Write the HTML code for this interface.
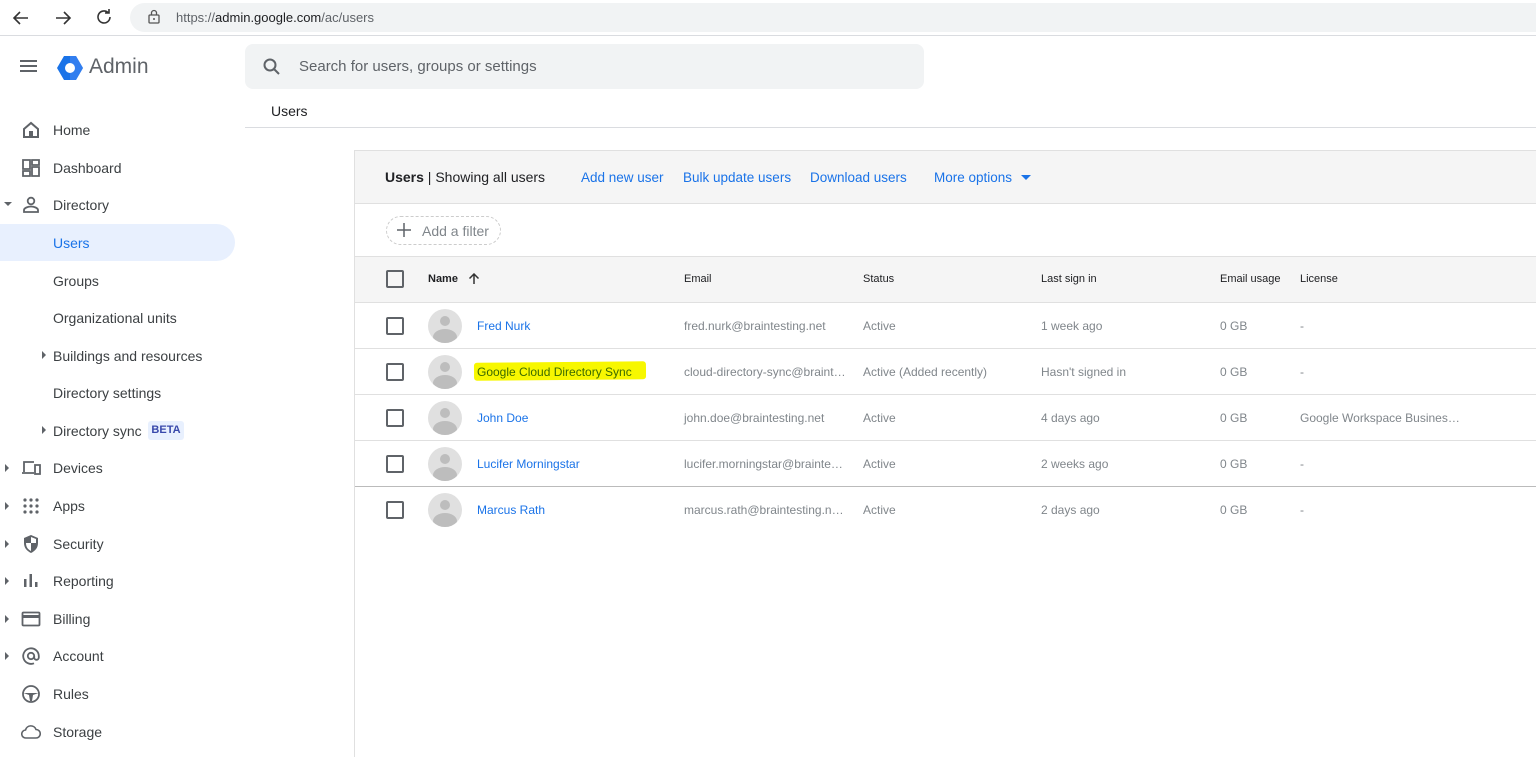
<!DOCTYPE html>
<html><head><meta charset="utf-8"><style>
*{box-sizing:border-box;margin:0;padding:0}
body{width:1536px;height:757px;overflow:hidden;background:#fff;font-family:"Liberation Sans",Arial,sans-serif;color:#3c4043;position:relative}
.abs{position:absolute}
.topbar{left:0;top:0;width:1536px;height:36px;background:#fff;border-bottom:1px solid #dadce0}
.url{left:130px;top:3px;width:1420px;height:29px;background:#f1f3f4;border-radius:15px}
.nav{position:absolute;left:0;width:240px;height:38px;font-size:14px;color:#3c4043}
.nav span.t{position:absolute;left:53px;top:11px}
.nav svg{position:absolute;left:21px;top:9px}
.tri{position:absolute;left:5px;top:15px;width:0;height:0;border-top:4px solid transparent;border-bottom:4px solid transparent;border-left:4px solid #5f6368}
.row{position:absolute;left:355px;width:1181px;height:46px;border-bottom:1px solid #e0e0e0}
.cb{position:absolute;left:31px;top:14px;width:18px;height:18px;border:2px solid #5f6368;border-radius:2px}
.av{position:absolute;left:73px;top:6px;width:34px;height:34px;border-radius:50%;background:#e0e0e0;overflow:hidden}
.av:before{content:"";position:absolute;left:12px;top:7px;width:10px;height:10px;border-radius:50%;background:#bdbdbd}
.av:after{content:"";position:absolute;left:5px;top:20px;width:24px;height:16px;border-radius:50%;background:#bdbdbd}
.nm{position:absolute;left:122px;top:16px;font-size:12px;color:#1a73e8}
.c{position:absolute;top:16px;font-size:12px;color:#80868b}
.lk{position:absolute;top:170px;font-size:13.5px;color:#1a73e8}
</style></head><body>
<div class="abs topbar"></div>
<svg class="abs" style="left:11px;top:8px" width="20" height="20" viewBox="0 0 20 20"><path d="M17 10H4M9 4L3 10l6 6" stroke="#333" stroke-width="1.6" fill="none"/></svg>
<svg class="abs" style="left:53px;top:8px" width="20" height="20" viewBox="0 0 20 20"><path d="M3 10h13M11 4l6 6-6 6" stroke="#333" stroke-width="1.6" fill="none"/></svg>
<svg class="abs" style="left:94px;top:7px" width="20" height="20" viewBox="0 0 20 20"><path d="M16 10a6 6 0 1 1-2-4.5M15 2v4h-4" stroke="#333" stroke-width="1.6" fill="none"/></svg>
<div class="abs url"></div>
<svg class="abs" style="left:147px;top:9px" width="14" height="16" viewBox="0 0 14 16"><rect x="2" y="6" width="10" height="8" rx="1" stroke="#555" fill="none" stroke-width="1.3"/><path d="M4.5 6V4a2.5 2.5 0 0 1 5 0v2" stroke="#555" fill="none" stroke-width="1.3"/><circle cx="7" cy="10" r="1" fill="#555"/></svg>
<div class="abs" style="left:176px;top:10px;font-size:13px;color:#5f6368">https://<span style="color:#202124">admin.google.com</span>/ac/users</div>

<svg class="abs" style="left:19px;top:58px" width="20" height="16" viewBox="0 0 20 16"><path d="M1 3h17M1 8h17M1 13h17" stroke="#5f6368" stroke-width="2"/></svg>
<svg class="abs" style="left:56px;top:54px" width="28" height="28" viewBox="0 0 28 28"><path d="M8 2h12l7 12-7 12H8L1 14z" fill="#1a73e8"/><path d="M14 2h6l7 12-7 12h-6z" fill="#4285f4" opacity=".6"/><circle cx="14" cy="14" r="5" fill="#fff"/></svg>
<div class="abs" style="left:89px;top:55px;font-size:21px;color:#5f6368">Admin</div>

<div class="abs" style="left:245px;top:44px;width:679px;height:45px;background:#f1f3f4;border-radius:8px"></div>
<svg class="abs" style="left:262px;top:57px" width="20" height="20" viewBox="0 0 20 20"><circle cx="8" cy="8" r="5.5" stroke="#5f6368" stroke-width="2" fill="none"/><path d="M12 12l5 5" stroke="#5f6368" stroke-width="2"/></svg>
<div class="abs" style="left:299px;top:58px;font-size:15px;color:#5f6368">Search for users, groups or settings</div>
<div class="abs" style="left:271px;top:103px;font-size:14px;color:#202124">Users</div>
<div class="abs" style="left:245px;top:127px;width:1291px;height:1px;background:#dadce0"></div>

<div class="nav" style="top:111px"><svg width="20" height="20" viewBox="0 0 20 20"><path d="M3 9l7-6 7 6v8H3z" stroke="#5f6368" stroke-width="2" fill="none"/><rect x="8" y="11" width="4" height="6" fill="#5f6368"/></svg><span class="t">Home</span></div>
<div class="nav" style="top:149px"><svg width="20" height="20" viewBox="0 0 20 20"><path d="M2 2h7v9H2zM11 2h7v5h-7zM2 13h7v5H2zM11 9h7v9h-7z" stroke="#5f6368" stroke-width="1.8" fill="none"/></svg><span class="t">Dashboard</span></div>
<div class="nav" style="top:186px"><div style="position:absolute;left:4px;top:16px;border-left:4px solid transparent;border-right:4px solid transparent;border-top:4px solid #5f6368"></div><svg width="20" height="20" viewBox="0 0 20 20"><circle cx="10" cy="6" r="3.3" stroke="#5f6368" stroke-width="1.8" fill="none"/><path d="M3 17v-2c0-2 4-3.5 7-3.5s7 1.5 7 3.5v2z" stroke="#5f6368" stroke-width="1.8" fill="none"/></svg><span class="t">Directory</span></div>
<div class="abs" style="left:0;top:224px;width:235px;height:37px;background:#e8f0fe;border-radius:0 19px 19px 0"></div>
<div class="abs" style="left:53px;top:235px;font-size:14px;color:#1a73e8">Users</div>
<div class="abs" style="left:53px;top:273px;font-size:14px">Groups</div>
<div class="abs" style="left:53px;top:310px;font-size:14px">Organizational units</div>
<div class="abs" style="left:42px;top:351px;border-top:4px solid transparent;border-bottom:4px solid transparent;border-left:4px solid #5f6368"></div>
<div class="abs" style="left:53px;top:348px;font-size:14px">Buildings and resources</div>
<div class="abs" style="left:53px;top:385px;font-size:14px">Directory settings</div>
<div class="abs" style="left:42px;top:426px;border-top:4px solid transparent;border-bottom:4px solid transparent;border-left:4px solid #5f6368"></div>
<div class="abs" style="left:53px;top:423px;font-size:14px">Directory sync</div>
<div class="abs" style="left:148px;top:421px;width:36px;height:19px;background:#e8f0fe;border-radius:3px;font-size:11px;font-weight:bold;color:#3949ab;text-align:center;line-height:19px">BETA</div>
<div class="nav" style="top:449px"><div class="tri"></div><svg width="20" height="20" viewBox="0 0 20 20"><path d="M3 14V4h10M1 15h12M14 7h5v9h-5z" stroke="#5f6368" stroke-width="1.8" fill="none"/></svg><span class="t">Devices</span></div>
<div class="nav" style="top:487px"><div class="tri"></div><svg width="20" height="20" viewBox="0 0 20 20" fill="#5f6368"><circle cx="4" cy="4" r="1.6"/><circle cx="10" cy="4" r="1.6"/><circle cx="16" cy="4" r="1.6"/><circle cx="4" cy="10" r="1.6"/><circle cx="10" cy="10" r="1.6"/><circle cx="16" cy="10" r="1.6"/><circle cx="4" cy="16" r="1.6"/><circle cx="10" cy="16" r="1.6"/><circle cx="16" cy="16" r="1.6"/></svg><span class="t">Apps</span></div>
<div class="nav" style="top:525px"><div class="tri"></div><svg width="20" height="20" viewBox="0 0 20 20"><path d="M10 1l7 3v5c0 5-3 8-7 10-4-2-7-5-7-10V4z" fill="#5f6368"/><path d="M10 3l5 2v4h-5zM10 9v8c-3-1.5-5-4-5-8z" fill="#fff"/></svg><span class="t">Security</span></div>
<div class="nav" style="top:562px"><div class="tri"></div><svg width="20" height="20" viewBox="0 0 20 20" fill="#5f6368"><rect x="3" y="8" width="2.5" height="8"/><rect x="8.5" y="3" width="2.5" height="13"/><rect x="14" y="11" width="2.5" height="5"/></svg><span class="t">Reporting</span></div>
<div class="nav" style="top:600px"><div class="tri"></div><svg width="20" height="20" viewBox="0 0 20 20"><rect x="1.5" y="3.5" width="17" height="13" rx="1" stroke="#5f6368" stroke-width="1.8" fill="none"/><rect x="1.5" y="6" width="17" height="3" fill="#5f6368"/></svg><span class="t">Billing</span></div>
<div class="nav" style="top:637px"><div class="tri"></div><svg width="20" height="20" viewBox="0 0 20 20"><circle cx="10" cy="10" r="3.2" stroke="#5f6368" stroke-width="1.8" fill="none"/><path d="M13.2 10v1.5a2.3 2.3 0 0 0 4.6 0V10A7.8 7.8 0 1 0 13 17.3" stroke="#5f6368" stroke-width="1.8" fill="none"/></svg><span class="t">Account</span></div>
<div class="nav" style="top:675px"><svg width="20" height="20" viewBox="0 0 20 20"><circle cx="10" cy="10" r="8" stroke="#5f6368" stroke-width="1.8" fill="none"/><path d="M2.5 9h15L12 11l-1 6H9l-1-6z" fill="#5f6368"/></svg><span class="t">Rules</span></div>
<div class="nav" style="top:713px"><svg width="20" height="20" viewBox="0 0 20 20"><path d="M5 16a4 4 0 0 1-.5-8A5.5 5.5 0 0 1 15 7.5 4.2 4.2 0 0 1 15 16z" stroke="#5f6368" stroke-width="1.6" fill="none"/></svg><span class="t">Storage</span></div>

<div class="abs" style="left:354px;top:150px;width:1182px;height:607px;border-left:1px solid #e0e0e0;border-top:1px solid #e0e0e0"></div>
<div class="abs" style="left:355px;top:151px;width:1181px;height:53px;background:#f5f5f5;border-bottom:1px solid #e0e0e0"></div>
<div class="abs" style="left:385px;top:169px;font-size:14px;color:#202124"><b>Users</b> | Showing all users</div>
<div class="lk" style="left:581px">Add new user</div>
<div class="lk" style="left:683px">Bulk update users</div>
<div class="lk" style="left:810px">Download users</div>
<div class="lk" style="left:934px">More options</div>
<div class="abs" style="left:1021px;top:175px;border-left:5px solid transparent;border-right:5px solid transparent;border-top:5px solid #1a73e8"></div>
<div class="abs" style="left:386px;top:216px;width:115px;height:29px;border:1px dashed #ccc;border-radius:15px"></div>
<svg class="abs" style="left:397px;top:223px" width="14" height="14" viewBox="0 0 14 14"><path d="M7 0v14M0 7h14" stroke="#5f6368" stroke-width="1.5"/></svg>
<div class="abs" style="left:422px;top:223px;font-size:14px;color:#80868b">Add a filter</div>

<div class="row" style="top:256px;height:47px;background:#f5f5f5;border-top:1px solid #e0e0e0"><div class="cb" style="top:13px"></div>
<div class="c" style="left:73px;top:16px;color:#202124;font-weight:bold;font-size:11px">Name</div>
<svg style="position:absolute;left:113px;top:16px" width="12" height="12" viewBox="0 0 12 12"><path d="M6 11V1M1.5 5.5L6 1l4.5 4.5" stroke="#333" stroke-width="1.5" fill="none"/></svg>
<div class="c" style="left:329px;color:#202124;font-size:11px">Email</div>
<div class="c" style="left:508px;color:#202124;font-size:11px">Status</div>
<div class="c" style="left:686px;color:#202124;font-size:11px">Last sign in</div>
<div class="c" style="left:865px;color:#202124;font-size:11px">Email usage</div>
<div class="c" style="left:945px;color:#202124;font-size:11px">License</div></div>

<div class="row" style="top:303px"><div class="cb"></div><div class="av"></div><div class="nm">Fred Nurk</div><div class="c" style="left:329px">fred.nurk@braintesting.net</div><div class="c" style="left:508px">Active</div><div class="c" style="left:686px">1 week ago</div><div class="c" style="left:865px">0 GB</div><div class="c" style="left:945px">-</div></div>
<div class="row" style="top:349px"><div class="cb"></div><div class="av"></div><div class="abs" style="left:119px;top:13px;width:172px;height:18px;background:#f7f700;border-radius:3px;transform:rotate(-0.5deg)"></div><div class="nm" style="color:#3a6a00">Google Cloud Directory Sync</div><div class="c" style="left:329px">cloud-directory-sync@braint…</div><div class="c" style="left:508px">Active (Added recently)</div><div class="c" style="left:686px">Hasn't signed in</div><div class="c" style="left:865px">0 GB</div><div class="c" style="left:945px">-</div></div>
<div class="row" style="top:395px"><div class="cb"></div><div class="av"></div><div class="nm">John Doe</div><div class="c" style="left:329px">john.doe@braintesting.net</div><div class="c" style="left:508px">Active</div><div class="c" style="left:686px">4 days ago</div><div class="c" style="left:865px">0 GB</div><div class="c" style="left:945px">Google Workspace Busines…</div></div>
<div class="row" style="top:441px;border-bottom-color:#bbb"><div class="cb"></div><div class="av"></div><div class="nm">Lucifer Morningstar</div><div class="c" style="left:329px">lucifer.morningstar@brainte…</div><div class="c" style="left:508px">Active</div><div class="c" style="left:686px">2 weeks ago</div><div class="c" style="left:865px">0 GB</div><div class="c" style="left:945px">-</div></div>
<div class="row" style="top:487px;border-bottom:none"><div class="cb"></div><div class="av"></div><div class="nm">Marcus Rath</div><div class="c" style="left:329px">marcus.rath@braintesting.n…</div><div class="c" style="left:508px">Active</div><div class="c" style="left:686px">2 days ago</div><div class="c" style="left:865px">0 GB</div><div class="c" style="left:945px">-</div></div>
</body></html>
